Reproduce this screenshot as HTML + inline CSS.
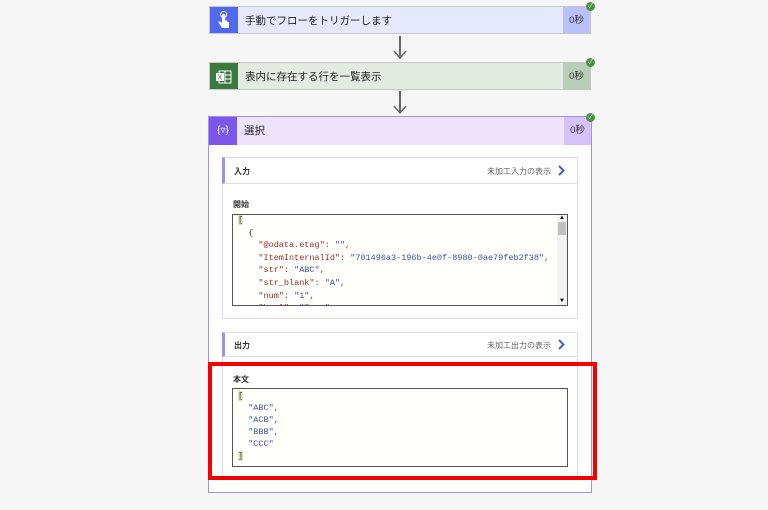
<!DOCTYPE html><html><head><meta charset="utf-8"><style>
body{margin:0;width:768px;height:510px;background:#f6f6f6;position:relative;font-family:"Liberation Sans","Noto Sans CJK JP",sans-serif;overflow:hidden}
.a{position:absolute}
.card{position:absolute;left:209px;width:382px;height:28px;border:1px solid #c8c8c8;box-sizing:border-box}
.ic{position:absolute;left:0;top:0;width:28px;height:100%}
.t{position:absolute;left:35px;top:6px;font-size:10.5px;color:#222}
.tm{position:absolute;right:0;top:0;width:27px;height:100%;font-size:9.5px;color:#333;text-align:center;line-height:27px}
.ok{position:absolute;width:9px;height:9px;border-radius:50%;background:#4d8f45;color:#fff;font-size:7px;line-height:9px;text-align:center}
.mono{font-family:"Liberation Mono",monospace;font-size:8.5px;line-height:12.6px;white-space:pre;color:#9b2c2c}
.s{color:#3d4faf}
</style></head><body>
<div class="card" style="top:6px;background:#e6e8fd"><div class="ic" style="background:#5168ef"><svg width="28" height="28" viewBox="0 0 28 28"><path d="M12 8v8l-2-1.5c-1-.6-2 .4-1.3 1.3L12 21h7v-5c0-1-1-1.5-2-1.3v-0.3c0-1-1-1.3-1.8-1V8c0-1.2-3.2-1.2-3.2 0z" fill="#fff"/><circle cx="13.6" cy="7.5" r="3" fill="none" stroke="#fff" stroke-width="1"/></svg></div><div class="t">手動でフローをトリガーします</div><div class="tm" style="background:#b9c1f9">0秒</div></div>
<div class="ok" style="left:586px;top:2px">✓</div>
<div class="a" style="left:399px;top:36px;width:1.5px;height:22px;background:#666"></div>
<svg class="a" style="left:393px;top:50px" width="14" height="10"><path d="M1 1l6 7 6-7" fill="none" stroke="#666" stroke-width="1.5"/></svg>
<div class="card" style="top:62px;background:#e3ebe3"><div class="ic" style="background:#3b7a3f"><svg width="28" height="28"><rect x="9" y="8" width="12" height="12" fill="none" stroke="#fff"/><path d="M15 8v12M15 12h6M15 16h6" stroke="#fff"/><rect x="6" y="10" width="8" height="8" fill="#fff"/><text x="7.5" y="16.5" font-size="7" fill="#3b7a3f" font-family="Liberation Sans">X</text></svg></div><div class="t">表内に存在する行を一覧表示</div><div class="tm" style="background:#b8ceb7">0秒</div></div>
<div class="ok" style="left:586px;top:58px">✓</div>
<div class="a" style="left:399px;top:91px;width:1.5px;height:22px;background:#666"></div>
<svg class="a" style="left:393px;top:105px" width="14" height="10"><path d="M1 1l6 7 6-7" fill="none" stroke="#666" stroke-width="1.5"/></svg>
<div class="a" style="left:208px;top:116px;width:384px;height:377px;border:1px solid #a38ef2;box-sizing:border-box;background:#fff"></div>
<div class="card" style="top:117px;border:none;background:#ede4fb"><div class="ic" style="background:#7c57ea;color:#fff;font-size:10px;text-align:center;line-height:28px">{▿}</div><div class="t">選択</div><div class="tm" style="background:#d5c2f8">0秒</div></div>
<div class="ok" style="left:586px;top:113px">✓</div>
<div class="a" style="left:222px;top:157px;width:356px;height:162px;border:1px solid #ddd;box-sizing:border-box"></div>
<div class="a" style="left:222px;top:157px;width:356px;height:27px;border:1px solid #ddd;border-left:3px solid #a38ef2;box-sizing:border-box;font-size:8px;color:#333"><span class="a" style="left:9px;top:8px;font-weight:bold">入力</span><span class="a" style="right:26px;top:8px;color:#666">未加工入力の表示</span><svg class="a" style="right:12px;top:7px" width="7" height="11"><path d="M1 1l4.5 4.5L1 10" fill="none" stroke="#4a5bd6" stroke-width="2"/></svg></div>
<div class="a" style="left:233px;top:199px;font-size:8px;font-weight:bold;color:#333">開始</div>
<div class="a" style="left:232px;top:214px;width:336px;height:92px;border:1px solid #555;box-sizing:border-box;background:#fffffc;overflow:hidden"><div class="mono a" style="left:5px;top:-1px"><span style="background:#dde4c8;color:#333">[</span>
<span style="color:#333">  {</span>
    "@odata.etag": <span class="s">""</span>,
    "ItemInternalId": <span class="s">"701496a3-196b-4e0f-8980-0ae79feb2f38"</span>,
    "str": <span class="s">"ABC"</span>,
    "str_blank": <span class="s">"A"</span>,
    "num": <span class="s">"1"</span>,
    "bool": <span class="s">"True"</span></div><div class="a" style="right:0;top:0;width:10px;height:90px;background:#f3f3f3"><div style="font-size:6px;text-align:center;line-height:7px">▲</div><div style="margin:0 1px;height:13px;background:#c1c1c1"></div><div class="a" style="bottom:0;width:10px;font-size:6px;text-align:center;line-height:7px">▼</div></div></div>
<div class="a" style="left:222px;top:332px;width:356px;height:145px;border:1px solid #ddd;box-sizing:border-box"></div>
<div class="a" style="left:222px;top:332px;width:356px;height:25px;border:1px solid #ddd;border-left:3px solid #a38ef2;box-sizing:border-box;font-size:8px;color:#333"><span class="a" style="left:9px;top:7px;font-weight:bold">出力</span><span class="a" style="right:26px;top:7px;color:#666">未加工出力の表示</span><svg class="a" style="right:12px;top:6px" width="7" height="11"><path d="M1 1l4.5 4.5L1 10" fill="none" stroke="#4a5bd6" stroke-width="2"/></svg></div>
<div class="a" style="left:233px;top:374px;font-size:8px;font-weight:bold;color:#333">本文</div>
<div class="a" style="left:232px;top:388px;width:336px;height:79px;border:1px solid #555;box-sizing:border-box;background:#fffffc"><div class="mono a s" style="left:5px;top:1px;line-height:12px;color:#3d4faf"><span style="background:#dde4c8;color:#333">[</span>
  "ABC",
  "ACB",
  "BBB",
  "CCC"
<span style="background:#dde4c8;color:#333">]</span></div></div>
<div class="a" style="left:208px;top:362px;width:389px;height:118px;border:4px solid #f50000;box-sizing:border-box"></div>
</body></html>
